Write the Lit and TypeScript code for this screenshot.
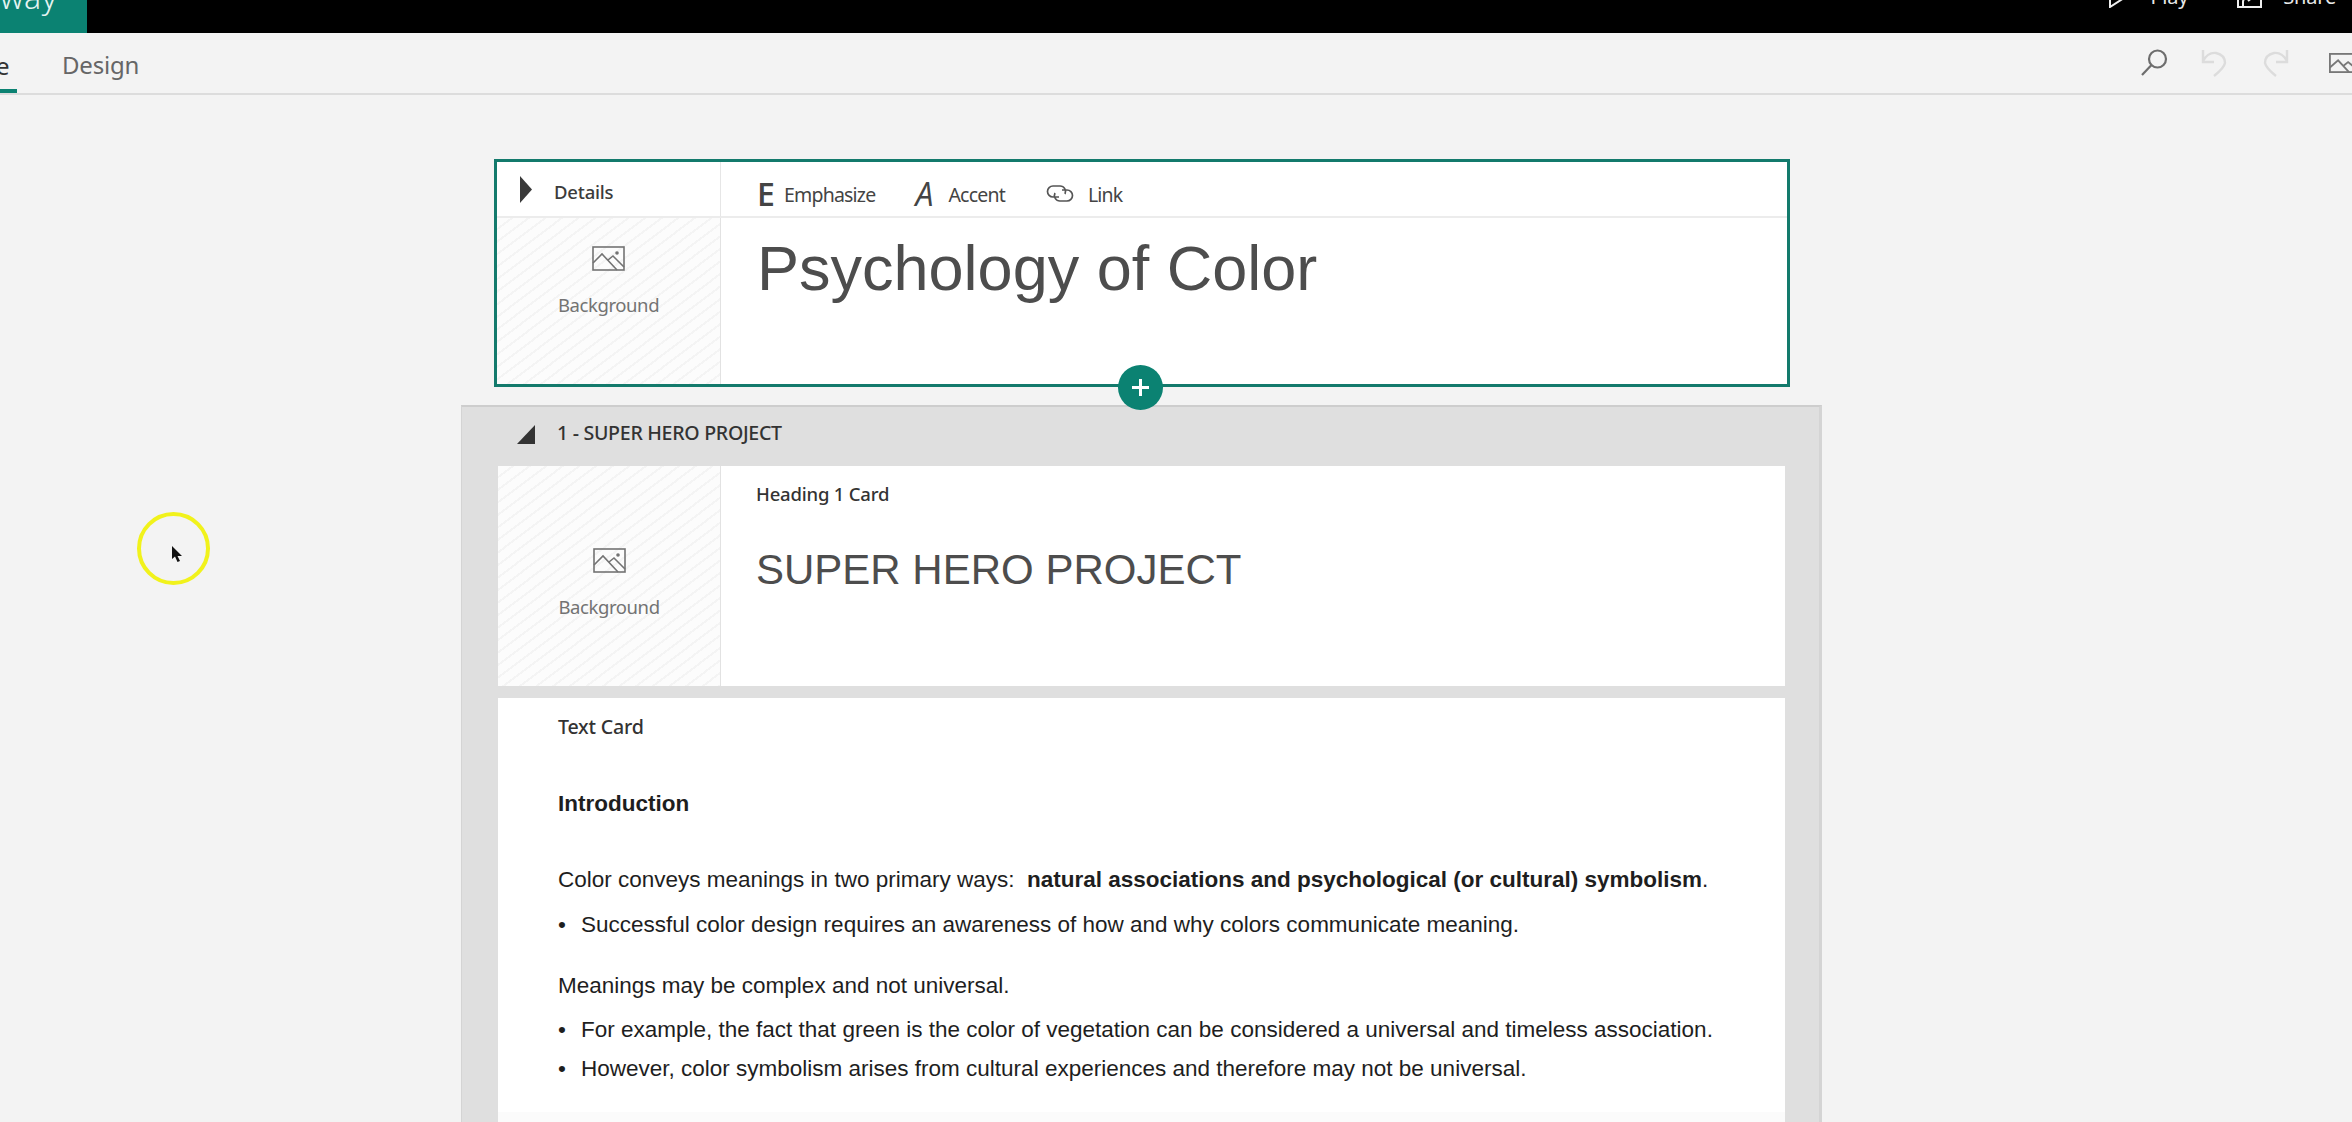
import { LitElement, html, css } from "lit";
import { customElement } from "lit/decorators.js";

const imageIcon = (cls: string) => html`<svg class=${cls} viewBox="0 0 33 25" fill="none" stroke="currentColor" stroke-width="1.6">
  <rect x="1" y="1" width="31" height="23"/>
  <path d="M1 17 L10 8 L25 24 M16 14 L21 10 L32 21"/>
  <circle cx="25" cy="7" r="1.8" fill="currentColor" stroke="none"/>
</svg>`;

const cover = () => html`<div class="cover">${imageIcon("img-icon")}<span class="bg-label">Background</span></div>`;

@customElement("app-root")
export class AppRoot extends LitElement {
  static styles = css`
    :host { display: block; width: 2352px; height: 1122px; overflow: hidden; background: #f3f3f3; font-family: "Noto Sans", "Open Sans", sans-serif; }
    * { box-sizing: border-box; }
    .page { position: relative; width: 2352px; height: 1122px; overflow: hidden; display: flex; flex-direction: column; }

    .top { flex: none; height: 33px; background: #000; display: flex; overflow: hidden; }
    .brand { width: 87px; height: 33px; background: #0b8272; color: #e4f4f1; font-size: 32px; line-height: 40px; overflow: hidden; }
    .brand span { display: block; margin-top: -23px; letter-spacing: 0.5px; font-weight: 300; }
    .top-actions { margin-left: auto; display: flex; align-items: flex-start; color: #e8e8e8; font-size: 20px; line-height: 30px; letter-spacing: -0.2px; }
    .top-actions .ico { flex: none; margin-top: -12px; }
    .top-actions span { display: block; margin-top: -18px; }
    .play-ico { width: 18px; height: 20px; margin-right: 24px; }
    .play-label { margin-right: 49px; }
    .share-ico { width: 25px; height: 20px; margin-right: 21px; }
    .share-label { margin-right: 16px; }

    .tools { flex: none; height: 62px; border-bottom: 2px solid #dcdcdc; display: flex; align-items: center; }
    .tab-e { width: 17px; height: 60px; color: #333; font-size: 24px; line-height: 60px; padding-top: 3px; text-indent: -4px; position: relative; overflow: hidden; }
    .tab-e::after { content: ""; position: absolute; left: 0; right: 0; bottom: 0; height: 4px; background: #0b8272; }
    .tab-design { margin-left: 45px; color: #666; font-size: 24px; line-height: 60px; padding-top: 3px; letter-spacing: -0.2px; }
    .tool-icons { margin-left: auto; display: flex; align-items: center; }
    .t-search { width: 30px; height: 30px; color: #6d6d6d; margin-right: 32px; }
    .t-undo { width: 26px; height: 28px; color: #dcdcdc; margin-right: 36px; }
    .t-redo { width: 26px; height: 28px; color: #dcdcdc; margin-right: 40px; }
    .t-img { flex: none; width: 30px; height: 20px; color: #777; margin-right: -7px; overflow: visible; }

    .work { flex: 1; min-height: 0; padding: 64px 0 0 461px; display: flex; flex-direction: column; align-items: flex-start; }

    .title-card { position: relative; width: 1296px; height: 228px; flex: none; border: 3px solid #137a6c; background: #fff; display: grid; grid-template-columns: 224px 1fr; grid-template-rows: 56px 1fr; margin-left: 33px; }
    .details { display: flex; align-items: center; padding-top: 4px; border-bottom: 2px solid #ececec; border-right: 1px solid #e6e6e6; color: #3c3c3c; }
    .tri-r { width: 12px; height: 27px; margin-left: 23px; margin-top: -4px; color: #3a3a3a; flex: none; }
    .details b { margin-left: 22px; font-size: 18.5px; font-weight: 500; letter-spacing: -0.2px; }
    .fmt { display: flex; align-items: center; border-bottom: 2px solid #ececec; padding-left: 36px; padding-top: 10px; color: #444; font-size: 19.5px; letter-spacing: -0.8px; }
    .fmt .glyph { font-size: 32px; line-height: 40px; color: #444; font-family: "Open Sans", sans-serif; letter-spacing: 0; }
    .fmt .g-e { width: 27px; font-weight: 600; }
    .fmt .g-a { width: 33px; margin-left: 40px; font-style: italic; font-weight: 400; }
    .fmt .link-ico { width: 28px; height: 18px; margin-left: 41px; color: #555; flex: none; margin-top: -3px; }
    .fmt .link-label { margin-left: 14px; }

    .cover { display: flex; flex-direction: column; align-items: center; background-color: #fcfcfc;
      background-image: repeating-linear-gradient(143deg, #fcfcfc 0 8px, #f4f4f4 8px 10px);
      border-right: 1px solid #e2e2e2; }
    .img-icon { width: 33px; height: 25px; color: #737373; margin-top: 28px; flex: none; }
    .bg-label { font-size: 18.5px; line-height: 28px; letter-spacing: -0.4px; margin-top: 20px; color: #737373; }

    .title-main { padding: 2px 0 0 36px; font: 63px/96px "Liberation Sans", Arial, sans-serif; color: #4d4d4d; }

    .plus { position: absolute; left: 621px; bottom: -26px; width: 45px; height: 45px; border-radius: 50%; background: #0b8272; z-index: 2; }
    .plus::before, .plus::after { content: ""; position: absolute; background: #fff; }
    .plus::before { left: 14px; top: 21px; width: 17px; height: 3px; }
    .plus::after { left: 21px; top: 14px; width: 3px; height: 17px; }

    .section { flex: 1; width: 1361px; margin-top: 18px; background: #dfdfdf; border: solid #d4d4d4; border-width: 2px 3px 0 1px; border-top-color: #cdcdcd; padding: 0 34px 0 36px; display: flex; flex-direction: column; min-height: 0; }
    .sec-head { flex: none; height: 59px; display: flex; align-items: center; padding-bottom: 8px; color: #333; }
    .tri-d { width: 18px; height: 19px; margin-left: 19px; margin-top: 4px; flex: none; color: #333; }
    .sec-head b { margin-left: 22px; font-size: 19.6px; font-weight: 500; letter-spacing: -0.3px; }

    .h-card { flex: none; height: 220px; background: #fff; display: grid; grid-template-columns: 223px 1fr; }
    .h-card .img-icon { margin-top: 82px; }
    .h-body { padding: 13px 0 0 35px; }
    .card-label { font-size: 18.5px; font-weight: 500; line-height: 30px; letter-spacing: -0.2px; color: #333; }
    .h-title { font: 42px/60px "Liberation Sans", Arial, sans-serif; color: #4d4d4d; margin-top: 31px; }

    .t-card { flex: 1; min-height: 0; margin-top: 12px; background: linear-gradient(#fff 0 414px, #fbfbfb 414px); padding: 14px 0 0 60px; font: 22.5px/30px "Liberation Sans", Arial, sans-serif; color: #1e1e1e; }
    .t-card .card-label { font-size: 19.6px; font-family: "Noto Sans", sans-serif; }
    .t-card p { margin: 0; }
    .t-card .intro { font-weight: 700; margin-top: 47px; }
    .t-card .lead { margin-top: 46px; }
    .t-card .b1 { margin-top: 15px; }
    .t-card .lead2 { margin-top: 31px; }
    .t-card .b2 { margin-top: 14px; }
    .t-card .b3 { margin-top: 9px; }
    .li { display: flex; }
    .li i { font-style: normal; width: 23px; flex: none; }

    .halo { position: absolute; left: 137px; top: 512px; width: 73px; height: 73px; border-radius: 50%; border: 4px solid #f1f21b; }
    .arrow { position: absolute; left: 171px; top: 546px; width: 12px; height: 17px; }
  `;

  render() {
    return html`<div class="page">
      <div class="top">
        <div class="brand"><span>way</span></div>
        <div class="top-actions">
          <svg class="ico play-ico" viewBox="0 0 18 20" fill="none" stroke="#eee" stroke-width="2"><path d="M2 1 V19 L16 10 Z"/></svg>
          <span class="play-label">Play</span>
          <svg class="ico share-ico" viewBox="0 0 25 20" fill="none" stroke="#eee" stroke-width="2"><path d="M1 1 H24 V19 H1 Z M6 18 V14 Q6 9 14 9 M11 5 L16 9 L11 13"/></svg>
          <span class="share-label">Share</span>
        </div>
      </div>

      <div class="tools">
        <div class="tab-e">e</div>
        <div class="tab-design">Design</div>
        <div class="tool-icons">
          <svg class="t-search" viewBox="0 0 30 30" fill="none" stroke="currentColor" stroke-width="2.2"><circle cx="18.5" cy="11" r="8.5"/><path d="M12.5 17 L3 27"/></svg>
          <svg class="t-undo" viewBox="0 0 26 28" fill="none" stroke="currentColor" stroke-width="2.4"><path d="M2 1 V13 H13 M2 12 Q7 3 15 4 Q24 6 24 14 Q23 19 13 27"/></svg>
          <svg class="t-redo" viewBox="0 0 26 28" fill="none" stroke="currentColor" stroke-width="2.4"><path d="M24 1 V13 H13 M24 12 Q19 3 11 4 Q2 6 2 14 Q3 19 13 27"/></svg>
          <svg class="t-img" viewBox="0 0 33 22" fill="none" stroke="currentColor" stroke-width="2"><rect x="1" y="1" width="31" height="20"/><path d="M1 16 L10 8 L22 21 M16 14 L21 10 L32 19"/></svg>
        </div>
      </div>

      <div class="work">
        <div class="title-card">
          <div class="details">
            <svg class="tri-r" viewBox="0 0 12 27" fill="currentColor"><path d="M0 0 L12 13.5 L0 27 Z"/></svg>
            <b>Details</b>
          </div>
          <div class="fmt">
            <span class="glyph g-e">E</span><span>Emphasize</span>
            <span class="glyph g-a">A</span><span>Accent</span>
            <svg class="link-ico" viewBox="0 0 28 18" fill="none" stroke="currentColor" stroke-width="1.7"><path d="M13 13 H7 A5.5 5.5 0 0 1 7 2 H14 A5.5 5.5 0 0 1 19 10 M16 6 H21 A5.5 5.5 0 0 1 21 17 H14 A5.5 5.5 0 0 1 9 9"/></svg>
            <span class="link-label">Link</span>
          </div>
          ${cover()}
          <div class="title-main">Psychology of Color</div>
          <div class="plus"></div>
        </div>

        <div class="section">
          <div class="sec-head">
            <svg class="tri-d" viewBox="0 0 18 19" fill="currentColor"><path d="M18 0 V19 H0 Z"/></svg>
            <b>1 - SUPER HERO PROJECT</b>
          </div>
          <div class="h-card">
            ${cover()}
            <div class="h-body">
              <div class="card-label">Heading 1 Card</div>
              <div class="h-title">SUPER HERO PROJECT</div>
            </div>
          </div>
          <div class="t-card">
            <div class="card-label">Text Card</div>
            <p class="intro">Introduction</p>
            <p class="lead">Color conveys meanings in two primary ways:&nbsp; <b>natural associations and psychological (or cultural) symbolism</b>.</p>
            <div class="li b1"><i>•</i><span>Successful color design requires an awareness of how and why colors communicate meaning.</span></div>
            <p class="lead2">Meanings may be complex and not universal.</p>
            <div class="li b2"><i>•</i><span>For example, the fact that green is the color of vegetation can be considered a universal and timeless association.</span></div>
            <div class="li b3"><i>•</i><span>However, color symbolism arises from cultural experiences and therefore may not be universal.</span></div>
          </div>
        </div>
      </div>

      <div class="halo"></div>
      <svg class="arrow" viewBox="0 0 12 17" fill="#111"><path d="M1 0 V13 L4 10.5 L6.5 16 L9 15 L6.5 10 H11 Z"/></svg>
    </div>`;
  }
}
